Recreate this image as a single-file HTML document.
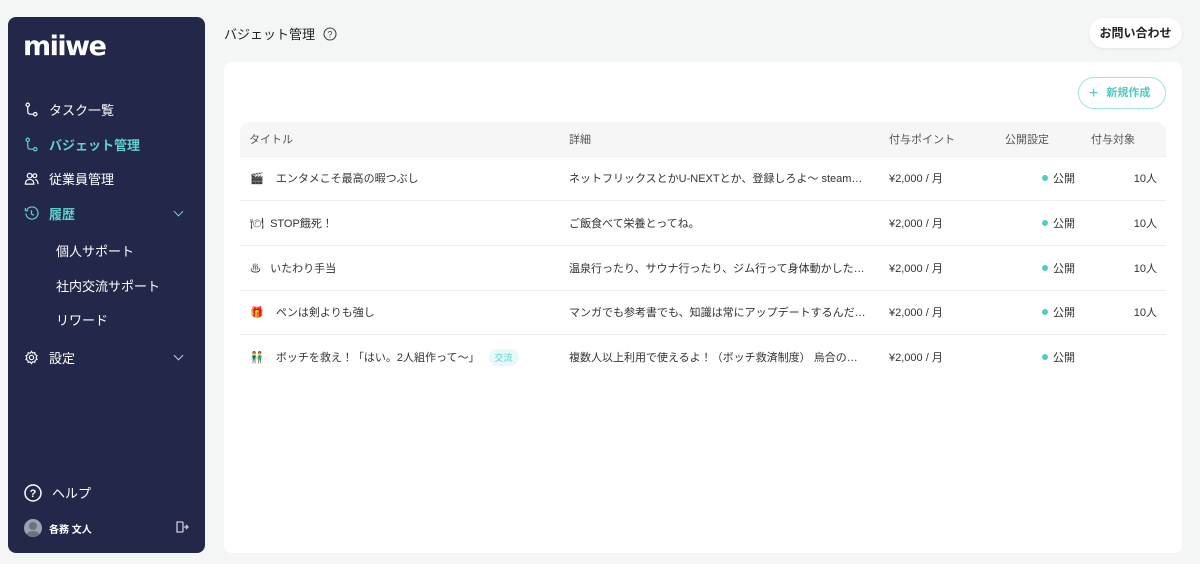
<!DOCTYPE html>
<html><head><meta charset="utf-8"><style>
*{margin:0;padding:0;box-sizing:border-box}
body{width:1200px;height:564px;background:#f4f5f5;font-family:"Liberation Sans","Noto Sans CJK JP",sans-serif;position:relative;overflow:hidden;color:#333}
.side{position:absolute;left:8px;top:17px;width:197px;height:536px;background:#23284a;border-radius:8px;color:#fff}
.logo{position:absolute;left:15px;top:14px;font-family:"DejaVu Sans",sans-serif;font-weight:bold;font-size:27px;letter-spacing:-1.5px}
.nav{position:absolute;left:16px;font-size:13px;display:flex;align-items:center;gap:10px}
.nav svg{width:15px;height:15px}
.sub{position:absolute;left:48px;font-size:13px}
.chev{position:absolute;left:167px;width:7px;height:7px;border-right:1.5px solid #ccd;border-bottom:1.5px solid #ccd;transform:rotate(45deg)}
.card{position:absolute;left:224px;top:62px;width:958px;height:491px;background:#fff;border-radius:8px}
table{position:absolute;left:16px;top:60px;width:926px;border-collapse:collapse;font-size:11px;color:#333;table-layout:fixed}
th{height:34px;background:#f6f6f6;font-weight:normal;color:#555;text-align:left;font-size:11px}
td{height:44.7px;border-top:1px solid #eee;white-space:nowrap;overflow:hidden;text-overflow:ellipsis}
.dot{display:inline-block;width:6px;height:6px;border-radius:50%;background:#4ecdc4;margin-right:5px;vertical-align:1px}
.pub{text-align:right;padding-right:16px}
</style></head><body>
<div class="side">
<div class="logo">miiwe</div>
<div class="nav" style="top:83px"><svg viewBox="0 0 16 16" fill="none" stroke="#fff" stroke-width="1.3"><circle cx="4" cy="3" r="1.8"/><circle cx="12" cy="13" r="1.8"/><path d="M4 5v5q0 3 3 3h3"/></svg>タスク一覧</div>
<div class="nav" style="top:118px;color:#5fd3cd;font-weight:bold"><svg viewBox="0 0 16 16" fill="none" stroke="#5fd3cd" stroke-width="1.3"><circle cx="4" cy="3" r="1.8"/><circle cx="12" cy="13" r="1.8"/><path d="M4 5v5q0 3 3 3h3"/></svg>バジェット管理</div>
<div class="nav" style="top:152px"><svg viewBox="0 0 16 16" fill="none" stroke="#fff" stroke-width="1.3"><circle cx="6" cy="5" r="2.5"/><path d="M1.5 14q0-5 4.5-5t4.5 5z"/><circle cx="11.5" cy="5" r="2"/><path d="M12 9q3 1 3 5"/></svg>従業員管理</div>
<div class="nav" style="top:187px;color:#5fd3cd;font-weight:bold"><svg viewBox="0 0 16 16" fill="none" stroke="#5fd3cd" stroke-width="1.3"><path d="M3 4a6.5 6.5 0 1 1-1 4"/><path d="M1.5 2v3h3"/><path d="M8 4.5v4l2.5 1.5"/></svg>履歴</div>
<div class="chev" style="top:191px;border-color:#5fd3cd"></div>
<div class="sub" style="top:224px">個人サポート</div>
<div class="sub" style="top:259px">社内交流サポート</div>
<div class="sub" style="top:293px">リワード</div>
<div class="nav" style="top:331px"><svg viewBox="0 0 16 16" fill="none" stroke="#fff" stroke-width="1.2"><circle cx="8" cy="8" r="2.3"/><path d="M8 1.5l1.3 1.8 2.2-.6.4 2.2 2 1-1 2 1 2-2 1-.4 2.2-2.2-.6L8 14.5l-1.3-1.8-2.2.6-.4-2.2-2-1 1-2-1-2 2-1 .4-2.2 2.2.6z"/></svg>設定</div>
<div class="chev" style="top:335px"></div>
<div class="nav" style="top:466px;font-size:13px"><svg viewBox="0 0 18 18" style="width:18px;height:18px" fill="none" stroke="#fff" stroke-width="1.5"><circle cx="9" cy="9" r="8"/><text x="9" y="13" font-size="11" text-anchor="middle" fill="#fff" stroke="none" font-family="Liberation Sans" font-weight="bold">?</text></svg>ヘルプ</div>
<div style="position:absolute;left:16px;top:502px;width:18px;height:18px;border-radius:50%;background:#9aa3ad;overflow:hidden"><div style="position:absolute;left:5px;top:3px;width:8px;height:8px;border-radius:50%;background:#6b7480"></div><div style="position:absolute;left:2px;top:12px;width:14px;height:10px;border-radius:50%;background:#6b7480"></div></div>
<div style="position:absolute;left:41px;top:504px;font-size:10px;font-weight:bold">各務 文人</div>
<svg style="position:absolute;left:167px;top:503px" width="14" height="14" viewBox="0 0 14 14" fill="none" stroke="#ccd" stroke-width="1.3"><path d="M8 2H2v10h6M8 2v10"/><path d="M9 7h4M11 5l2 2-2 2"/></svg>
</div>
<div style="position:absolute;left:224px;top:24px;font-size:13px;color:#222">バジェット管理</div>
<svg style="position:absolute;left:323px;top:27px" width="14" height="14" viewBox="0 0 14 14"><circle cx="7" cy="7" r="6" fill="none" stroke="#444" stroke-width="1.1"/><text x="7" y="10.5" font-size="9" text-anchor="middle" fill="#444" font-family="Liberation Sans">?</text></svg>
<div style="position:absolute;left:1089px;top:18px;width:93px;height:30px;background:#fff;border-radius:15px;box-shadow:0 1px 2px rgba(0,0,0,.08);font-size:12px;font-weight:bold;text-align:center;line-height:30px;color:#222">お問い合わせ</div>
<div class="card">
<div style="position:absolute;left:854px;top:15px;width:88px;height:32px;border:1px solid #9ee3df;border-radius:16px;color:#4ec9c5;font-size:11px;font-weight:bold;line-height:30px;padding-left:10px"><span style="font-size:16px;font-weight:normal;vertical-align:-2px;margin-right:8px">+</span>新規作成</div>
<table>
<colgroup><col style="width:329px"><col style="width:320px"><col style="width:116px"><col style="width:86px"><col style="width:75px"></colgroup>
<tr><th style="padding-left:9px;border-radius:10px 0 0 0">タイトル</th><th>詳細</th><th>付与ポイント</th><th>公開設定</th><th style="border-radius:0 10px 0 0">付与対象</th></tr>
<tr><td style="padding-left:10px">🎬&nbsp;&nbsp;&nbsp; エンタメこそ最高の暇つぶし</td><td style="padding-right:22px">ネットフリックスとかU-NEXTとか、登録しろよ～ steamやティンダーとか</td><td>¥2,000 / 月</td><td class="pub"><span class="dot"></span>公開</td><td style="text-align:right;padding-right:9px">10人</td></tr>
<tr><td style="padding-left:10px">🍽&nbsp; STOP餓死！</td><td style="padding-right:22px">ご飯食べて栄養とってね。</td><td>¥2,000 / 月</td><td class="pub"><span class="dot"></span>公開</td><td style="text-align:right;padding-right:9px">10人</td></tr>
<tr><td style="padding-left:10px">♨&nbsp;&nbsp; いたわり手当</td><td style="padding-right:22px">温泉行ったり、サウナ行ったり、ジム行って身体動かしたり。</td><td>¥2,000 / 月</td><td class="pub"><span class="dot"></span>公開</td><td style="text-align:right;padding-right:9px">10人</td></tr>
<tr><td style="padding-left:10px">🎁&nbsp;&nbsp;&nbsp; ペンは剣よりも強し</td><td style="padding-right:22px">マンガでも参考書でも、知識は常にアップデートするんだ！ オンラインでも</td><td>¥2,000 / 月</td><td class="pub"><span class="dot"></span>公開</td><td style="text-align:right;padding-right:9px">10人</td></tr>
<tr><td style="padding-left:10px">👬&nbsp;&nbsp;&nbsp; ボッチを救え！「はい。2人組作って～」 <span style="display:inline-block;margin-left:6px;background:#e6f8f7;color:#5fd3cd;font-size:9px;padding:2px 6px;border-radius:9px">交流</span></td><td style="padding-right:22px">複数人以上利用で使えるよ！（ボッチ救済制度） 烏合の衆でもいいから</td><td>¥2,000 / 月</td><td class="pub"><span class="dot"></span>公開</td><td></td></tr>
</table>
</div>
</body></html>
